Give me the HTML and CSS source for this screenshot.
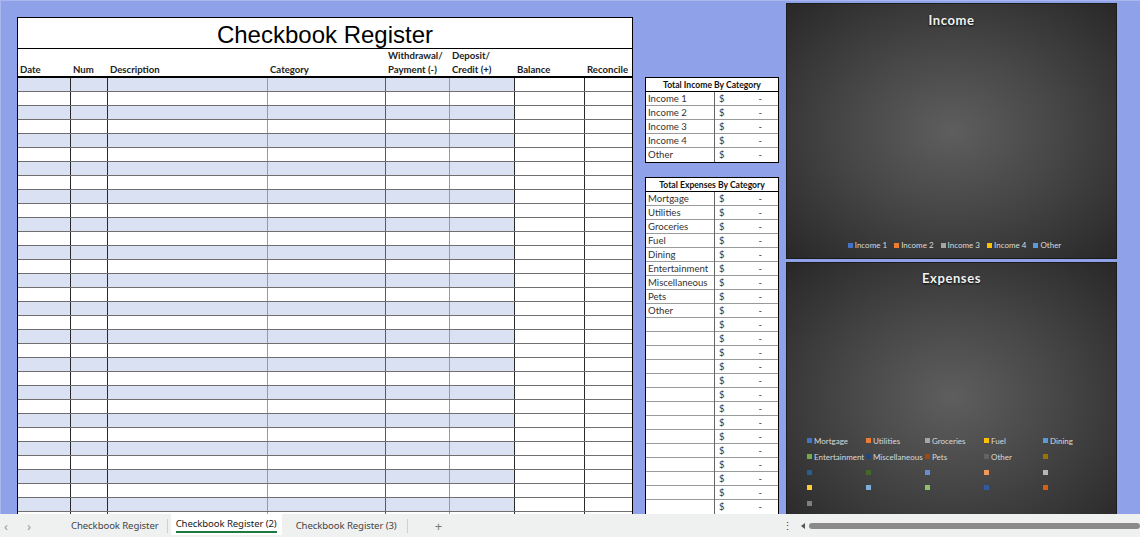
FILE: index.html
```html
<!DOCTYPE html>
<html>
<head>
<meta charset="utf-8">
<link rel="stylesheet" href="styles.css">
</head>
<body>
<div class="app">
  <div class="sheet">
    <div class="register">
      <div class="title">Checkbook Register</div>
      <div class="head">
        <div class="h">Date</div>
        <div class="h">Num</div>
        <div class="h">Description</div>
        <div class="h">Category</div>
        <div class="h">Withdrawal/<br>Payment (-)</div>
        <div class="h">Deposit/<br>Credit (+)</div>
        <div class="h">Balance</div>
        <div class="h">Reconcile</div>
      </div>
      <div class="rows" id="rows"></div>
    </div>

    <div class="side">
      <div class="tbl">
        <div class="tbl-head">Total Income By Category</div>
        <div class="tbl-row"><div class="lbl">Income 1</div><div class="amt"><span>$</span><span>-</span></div></div>
        <div class="tbl-row"><div class="lbl">Income 2</div><div class="amt"><span>$</span><span>-</span></div></div>
        <div class="tbl-row"><div class="lbl">Income 3</div><div class="amt"><span>$</span><span>-</span></div></div>
        <div class="tbl-row"><div class="lbl">Income 4</div><div class="amt"><span>$</span><span>-</span></div></div>
        <div class="tbl-row"><div class="lbl">Other</div><div class="amt"><span>$</span><span>-</span></div></div>
      </div>
      <div class="tbl exp" id="exp">
        <div class="tbl-head">Total Expenses By Category</div>
      </div>
    </div>

    <div class="charts">
      <div class="chart income">
        <div class="ctitle">Income</div>
        <div class="ilegend">
          <div class="li"><i style="background:#4472c4"></i>Income 1</div>
          <div class="li"><i style="background:#ed7d31"></i>Income 2</div>
          <div class="li"><i style="background:#a5a5a5"></i>Income 3</div>
          <div class="li"><i style="background:#ffc000"></i>Income 4</div>
          <div class="li"><i style="background:#5b9bd5"></i>Other</div>
        </div>
      </div>
      <div class="chart expenses">
        <div class="ctitle">Expenses</div>
        <div class="elegend">
          <div class="li"><i style="background:#4472c4"></i>Mortgage</div>
          <div class="li"><i style="background:#ed7d31"></i>Utilities</div>
          <div class="li"><i style="background:#a5a5a5"></i>Groceries</div>
          <div class="li"><i style="background:#ffc000"></i>Fuel</div>
          <div class="li"><i style="background:#5b9bd5"></i>Dining</div>
          <div class="li"><i style="background:#70ad47"></i>Entertainment</div>
          <div class="li"><i style="background:#264478"></i>Miscellaneous</div>
          <div class="li"><i style="background:#9e480e"></i>Pets</div>
          <div class="li"><i style="background:#636363"></i>Other</div>
          <div class="li"><i style="background:#997300"></i></div>
          <div class="li"><i style="background:#255e91"></i></div>
          <div class="li"><i style="background:#43682b"></i></div>
          <div class="li"><i style="background:#698ed0"></i></div>
          <div class="li"><i style="background:#f1975a"></i></div>
          <div class="li"><i style="background:#b7b7b7"></i></div>
          <div class="li"><i style="background:#ffcd33"></i></div>
          <div class="li"><i style="background:#7cafdd"></i></div>
          <div class="li"><i style="background:#8cc168"></i></div>
          <div class="li"><i style="background:#335aa1"></i></div>
          <div class="li"><i style="background:#d26012"></i></div>
          <div class="li"><i style="background:#7f7f7f"></i></div>
        </div>
      </div>
    </div>
  </div>

  <div class="tabbar">
    <span class="nav first-nav">&lsaquo;</span>
    <span class="nav">&rsaquo;</span>
    <span class="tab first">Checkbook Register</span>
    <span class="sep"></span>
    <span class="tab active">Checkbook Register (2)</span>
    <span class="tab third">Checkbook Register (3)</span>
    <span class="sep"></span>
    <span class="plus">+</span>
    <span class="grow"></span>
    <span class="dots">&#8942;</span>
    <span class="tri"></span>
    <span class="thumb"></span>
  </div>
</div>
<script>
  var rows = document.getElementById('rows');
  var html = '';
  for (var i = 0; i < 32; i++) {
    html += '<div class="row' + (i % 2 === 0 ? ' alt' : '') + '">' +
      '<div class="c"></div><div class="c"></div><div class="c"></div><div class="c"></div>' +
      '<div class="c"></div><div class="c"></div><div class="c"></div><div class="c"></div></div>';
  }
  rows.innerHTML = html;
  var exp = document.getElementById('exp');
  var names = ['Mortgage','Utilities','Groceries','Fuel','Dining','Entertainment','Miscellaneous','Pets','Other'];
  var e = '';
  for (var j = 0; j < 23; j++) {
    e += '<div class="tbl-row"><div class="lbl">' + (names[j] || '') + '</div><div class="amt"><span>$</span><span>-</span></div></div>';
  }
  exp.insertAdjacentHTML('beforeend', e);
</script>
</body>
</html>
```

FILE: styles.css
```css
* { box-sizing: border-box; }
html, body { margin: 0; padding: 0; }
body {
  width: 1140px;
  height: 537px;
  overflow: hidden;
  font-family: Lato, "Liberation Sans", sans-serif;
  background: #8ea1e9;
}
.app { display: flex; flex-direction: column; height: 537px; }

.sheet {
  height: 514px;
  overflow: hidden;
  display: flex;
  align-items: flex-start;
  background: #8ea1e9;
  border-top: 1px solid #a9b7ee;
  border-left: 1px solid #a9b7ee;
}

/* Register */
.register {
  margin-top: 16px;
  margin-left: 16px;
  width: 616px;
  background: #fff;
  border: 1.5px solid #000;
  border-bottom: none;
  flex-shrink: 0;
}
.title {
  height: 31px;
  border-bottom: 1.5px solid #000;
  font-family: "Liberation Sans", Arial, sans-serif;
  font-size: 24px;
  line-height: 33px;
  text-align: center;
  color: #000;
}
.head, .row {
  display: grid;
  grid-template-columns: 53px 37px 160px 118px 64px 65px 70px 1fr;
}
.head {
  height: 29px;
  border-bottom: 2px solid #000;
}
.h {
  font-size: 9.6px;
  font-weight: 700;
  color: #222;
  padding: 0 0 0 2px;
  display: flex;
  align-items: flex-end;
  line-height: 14px;
  white-space: nowrap;
}
.row {
  height: 14px;
  border-bottom: 1px solid #6f6f6f;
}
.c { border-right: 1px solid #2a2a2a; }
.c:nth-child(3) { border-right: 1.5px solid #9a9a9a; }
.c:nth-child(4) { border-right: 1px solid #5a5a5a; }
.c:nth-child(5) { border-right: 1px solid #9a9a9a; }
.c:nth-child(8) { border-right: none; }
.row.alt .c:nth-child(-n+6) { background: #d9e1f2; }

/* Side tables */
.side {
  margin-top: 76px;
  margin-left: 12px;
  width: 134px;
  display: flex;
  flex-direction: column;
  gap: 14px;
  flex-shrink: 0;
}
.tbl {
  background: #fff;
  border: 1.5px solid #000;
}
.tbl-head {
  height: 14px;
  border-bottom: 1.5px solid #000;
  font-size: 8.6px;
  font-weight: 700;
  color: #111;
  text-align: center;
  line-height: 14px;
  white-space: nowrap;
}
.tbl-row {
  display: grid;
  grid-template-columns: 69px 1fr;
  height: 14px;
  border-bottom: 1px solid #9a9a9a;
  font-size: 9.6px;
  color: #333;
  line-height: 14px;
}
.tbl-row:last-child { border-bottom: none; }
.lbl {
  border-right: 1px solid #666;
  padding-left: 2px;
  white-space: nowrap;
  overflow: hidden;
}
.amt {
  display: flex;
  justify-content: space-between;
  padding: 0 16px 0 4px;
}

/* Charts */
.charts {
  margin-top: 2px;
  margin-left: 7px;
  width: 331px;
  display: flex;
  flex-direction: column;
  gap: 3px;
  flex-shrink: 0;
}
.chart {
  border: 1px solid #1c1c1c;
  background: radial-gradient(ellipse at center, #5e5e5e 0%, #474747 45%, #282828 100%);
  display: flex;
  flex-direction: column;
  align-items: center;
}
.income { height: 256px; }
.expenses { height: 270px; }
.ctitle {
  color: #f2f2f2;
  font-weight: 700;
  font-size: 13px;
  letter-spacing: 0.6px;
  text-shadow: 0 1px 2px rgba(0,0,0,0.9);
  line-height: 16px;
}
.income .ctitle { margin-top: 8px; }
.expenses .ctitle { margin-top: 7px; }
.ilegend {
  margin-top: auto;
  margin-bottom: 8px;
  display: flex;
  gap: 7px;
  font-size: 8px;
  color: #d9d9d9;
  margin-left: 6px;
}
.li {
  display: flex;
  align-items: center;
  white-space: nowrap;
  line-height: 10px;
}
.li i {
  display: inline-block;
  width: 5px;
  height: 5px;
  margin-right: 2px;
  flex-shrink: 0;
}
.elegend {
  align-self: stretch;
  margin-top: 147px;
  margin-left: 20px;
  display: grid;
  grid-template-columns: repeat(5, 59px);
  grid-auto-rows: 15.7px;
  font-size: 8px;
  color: #d9d9d9;
}

/* Tab bar */
.tabbar {
  height: 23px;
  background: #eff1f1;
  display: flex;
  align-items: center;
  font-family: "Noto Sans", "Open Sans", sans-serif;
  font-size: 9.6px;
  color: #444;
}
.nav {
  color: #9a9a9a;
  font-size: 13px;
  width: 22px;
  text-align: center;
  line-height: 20px;
}
.nav.first-nav { width: 12px; margin-right: 6px; }
.tab { white-space: nowrap; line-height: 23px; letter-spacing: -0.1px; }
.tab.first { margin-left: 31px; margin-right: 8px; }
.tab.active {
  background: #fff;
  color: #1a1a1a;
  height: 21px;
  align-self: flex-start;
  line-height: 19px;
  padding: 0 5px;
  margin-left: 3px;
  position: relative;
}
.tab.active::after {
  content: "";
  position: absolute;
  left: 5px;
  right: 5px;
  bottom: 2px;
  height: 2px;
  background: #1d7a3f;
}
.tab.third { margin-left: 14px; margin-right: 10px; }
.sep {
  width: 1px;
  height: 14px;
  background: #d0d0d0;
}
.plus {
  margin-left: 27px;
  color: #777;
  font-size: 13px;
}
.grow { flex: 1; }
.dots { color: #444; font-size: 11px; margin-right: 8px; }
.tri {
  width: 0; height: 0;
  border-top: 3.5px solid transparent;
  border-bottom: 3.5px solid transparent;
  border-right: 4px solid #555;
  margin-right: 4px;
}
.thumb {
  width: 331px;
  height: 6px;
  border-radius: 3px;
  background: #8a8a8a;
}
```
